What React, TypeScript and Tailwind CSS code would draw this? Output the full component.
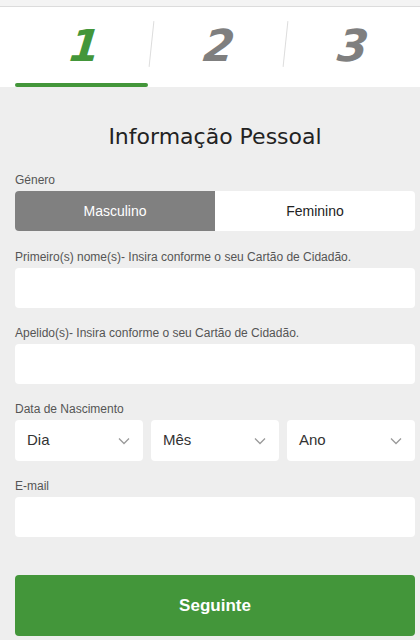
import React from "react";

const Chevron = () => (
  <svg width="12" height="8" viewBox="0 0 12 8" fill="none" className="shrink-0">
    <path d="M1 1.5 6 6.5 11 1.5" stroke="#9a9a9a" strokeWidth="1.3" />
  </svg>
);

const Label = ({ children }: { children: React.ReactNode }) => (
  <div className="text-[12px] leading-[17px] text-[#555] mb-[2px]">{children}</div>
);

const Field = () => <div className="h-10 w-full rounded-[4px] bg-white" />;

const Select = ({ text }: { text: string }) => (
  <div className="flex h-[41px] flex-1 items-center justify-between rounded-[4px] bg-white pl-3 pr-[13px]">
    <span className="text-[15px] text-[#333]">{text}</span>
    <Chevron />
  </div>
);

export default function App() {
  return (
    <div className="min-h-[640px] w-[420px] bg-[#eeeeee] font-['Liberation_Sans',sans-serif]">
      <div className="h-[6px] bg-[#f4f4f4]" />
      <div className="border-t border-[#dcdcdc] bg-white">
        <div className="flex h-[76px] items-center pl-[18px]">
          {["1", "2", "3"].map((n, i) => (
            <div key={n} className="relative flex h-full flex-1 items-center justify-center">
              <span
                className={
                  "pt-[2px] text-[44px] font-black italic leading-none -skew-x-6 font-['DejaVu_Sans',sans-serif] " +
                  (i === 0 ? "text-[#43963a]" : "text-[#7f7f7f]")
                }
              >
                {n}
              </span>
              {i < 2 && (
                <span className="absolute right-0 top-[14px] h-[46px] w-px rotate-[6deg] bg-[#dddddd]" />
              )}
            </div>
          ))}
        </div>
        <div className="flex h-[4px] items-end px-[15px]">
          <div className="h-[4px] w-[133px] rounded-full bg-[#43963a]" />
        </div>
      </div>

      <div className="pl-[15px] pr-[5px]">
        <h1 className="pt-[37px] pb-[22px] text-center text-[22px] leading-[26px] text-[#222] font-['DejaVu_Sans',sans-serif]">
          Informação Pessoal
        </h1>

        <Label>Género</Label>
        <div className="flex h-10 overflow-hidden rounded-[4px] bg-white text-[14px]">
          <div className="flex flex-1 items-center justify-center bg-[#808080] text-white">Masculino</div>
          <div className="flex flex-1 items-center justify-center text-[#222]">Feminino</div>
        </div>

        <div className="mt-[18px]">
          <Label>Primeiro(s) nome(s)- Insira conforme o seu Cartão de Cidadão.</Label>
          <Field />
        </div>

        <div className="mt-[17px]">
          <Label>Apelido(s)- Insira conforme o seu Cartão de Cidadão.</Label>
          <Field />
        </div>

        <div className="mt-[17px]">
          <Label>Data de Nascimento</Label>
          <div className="flex gap-2">
            <Select text="Dia" />
            <Select text="Mês" />
            <Select text="Ano" />
          </div>
        </div>

        <div className="mt-[17px]">
          <Label>E-mail</Label>
          <Field />
        </div>

        <button className="mt-[38px] flex h-[61px] w-full items-center justify-center rounded-[4px] bg-[#43963a] text-[17px] font-bold text-white">
          Seguinte
        </button>
      </div>
    </div>
  );
}
